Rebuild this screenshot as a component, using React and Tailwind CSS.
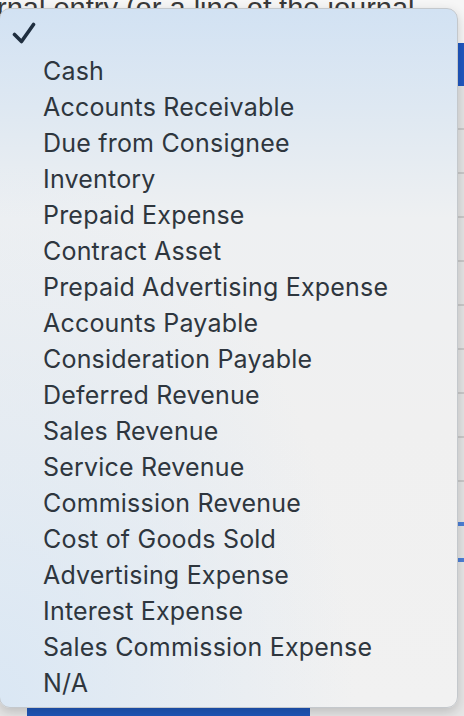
const items = [
  'Cash',
  'Accounts Receivable',
  'Due from Consignee',
  'Inventory',
  'Prepaid Expense',
  'Contract Asset',
  'Prepaid Advertising Expense',
  'Accounts Payable',
  'Consideration Payable',
  'Deferred Revenue',
  'Sales Revenue',
  'Service Revenue',
  'Commission Revenue',
  'Cost of Goods Sold',
  'Advertising Expense',
  'Interest Expense',
  'Sales Commission Expense',
  'N/A',
];

const Check = () => (
  <svg width="24" height="24" viewBox="0 0 24 24" className="ml-[12px]">
    <path d="M2.5 12.5 L9.5 19.5 L21.5 2.5" fill="none" stroke="#1f2e3f" strokeWidth="3.6" strokeLinecap="round" strokeLinejoin="round" />
  </svg>
);

const App = () => {
  return (
    <div className="relative h-[716px] w-[464px] overflow-hidden bg-[#e6e6e6] font-['Inter',sans-serif]">
      {/* page behind the menu */}
      <div className="flex flex-col">
        <div className="h-[43px] bg-[#f6f6f6] overflow-hidden">
          <p className="mt-[-13px] ml-[-3px] whitespace-nowrap text-[29px] text-[#3a3a3a] font-['Liberation_Sans',sans-serif]">
            rnal entry (or a line of the journal
          </p>
        </div>
        <div className="h-[43px] bg-[#2058c0]" />
        {[0, 1, 2, 3, 4, 5, 6, 7, 8].map((i) => (
          <div key={i} className="h-[44px] border-b-2 border-[#c9c9c9] bg-[#e4e4e4]" />
        ))}
        <div className="h-[44px] border-b-4 border-[#4d7fd6] bg-[#e4e4e4]" />
        <div className="h-[36px] border-b-4 border-[#4d7fd6] bg-[#e4e4e4]" />
        <div className="flex-1" />
      </div>
      <div className="absolute bottom-0 left-[27px] h-[12px] w-[283px] bg-[#1f57b9]" />

      {/* dropdown menu */}
      <div className="absolute left-[-1px] top-[8px] w-[459px] rounded-[11px] border border-[#c4c8cc] bg-[radial-gradient(ellipse_at_bottom_left,#dae7f4_0%,rgba(218,231,244,0)_55%),linear-gradient(180deg,#d2e2f3_0%,#dee8f2_14%,#eef0f2_30%,#f0f0f0_60%,#f1f1f1_100%)] py-[7px] shadow-[0_4px_12px_rgba(0,0,0,0.18)]">
        <div className="flex h-[36px] items-center">
          <Check />
        </div>
        {items.map((label) => (
          <div key={label} className="flex h-[36px] items-center pl-[43px] pt-[3px] text-[25px] tracking-[0.2px] text-[#2e363e] whitespace-nowrap">
            {label}
          </div>
        ))}
      </div>
    </div>
  );
};

export default App;
